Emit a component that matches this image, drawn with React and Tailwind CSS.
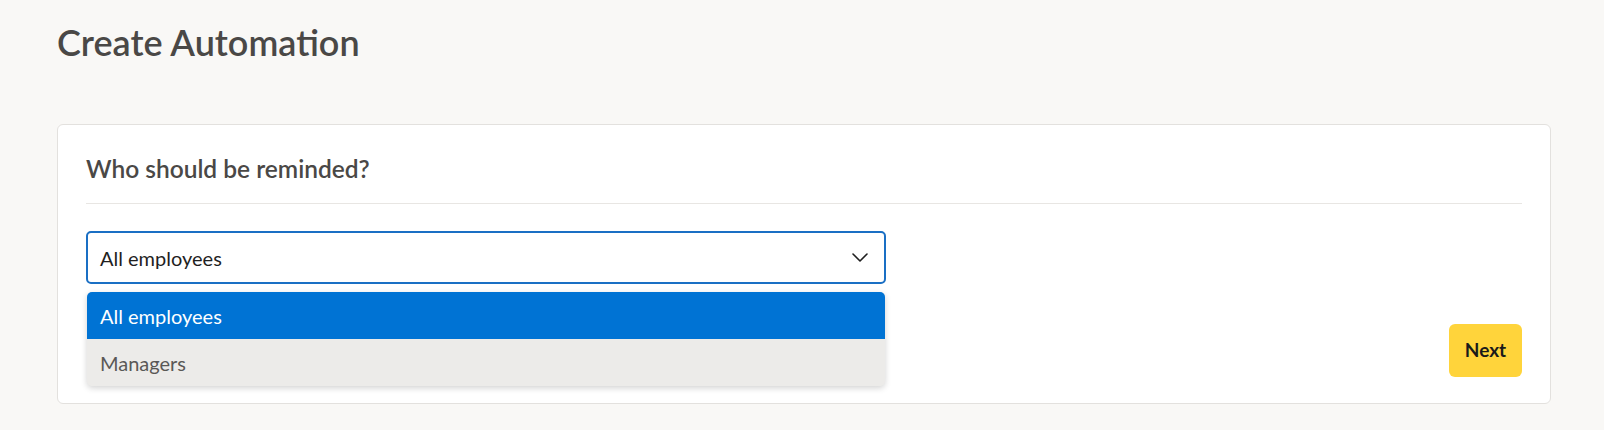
import React from "react";

function Chevron() {
  return (
    <svg width="16" height="9" viewBox="0 0 16 9" fill="none" className="shrink-0">
      <path d="M1 1l7 7 7-7" stroke="#1f1f1f" strokeWidth="1.6" strokeLinecap="round" strokeLinejoin="round" />
    </svg>
  );
}

export default function App() {
  return (
    <div className="min-h-[430px] w-full bg-[#f9f8f6] pl-[57px] pr-[53px] pt-[22px] pb-[27px] font-['Lato','Liberation_Sans',sans-serif]">
      <h1 className="text-[36px] leading-[40px] font-semibold text-[#4a4846]">Create Automation</h1>
      <div className="mt-[62px] rounded-md border border-[#e3e1de] bg-white px-[28px] pt-[28px] pb-[26px]">
        <div className="border-b border-[#e8e6e3] pb-[18px]">
          <h2 className="text-[24.5px] leading-[32px] font-semibold text-[#4a4846]">Who should be reminded?</h2>
        </div>
        <div className="relative mt-[27px] w-[800px]">
          <div className="flex h-[53px] items-center justify-between rounded-[5px] border-2 border-[#1a6fc4] bg-white pl-[12px] pr-[16px] text-[20px] text-[#1f1f1f]">
            <span>All employees</span>
            <Chevron />
          </div>
          <div className="absolute left-[1px] right-[1px] top-[61px] overflow-hidden rounded-[5px] bg-[#ecebe9] shadow-[0_2px_6px_rgba(0,0,0,0.18)]">
            <div className="flex h-[47px] items-center bg-[#0073d4] pl-[13px] text-[20px] text-white">All employees</div>
            <div className="flex h-[47px] items-center bg-[#ecebe9] pl-[13px] text-[20px] text-[#5a5856]">Managers</div>
          </div>
        </div>
        <div className="mt-[40px] flex justify-end">
          <button className="flex h-[53px] w-[73px] items-center justify-center rounded-md bg-[#ffd43b] text-[19px] font-bold text-[#1a1a1a]">
            Next
          </button>
        </div>
      </div>
    </div>
  );
}
